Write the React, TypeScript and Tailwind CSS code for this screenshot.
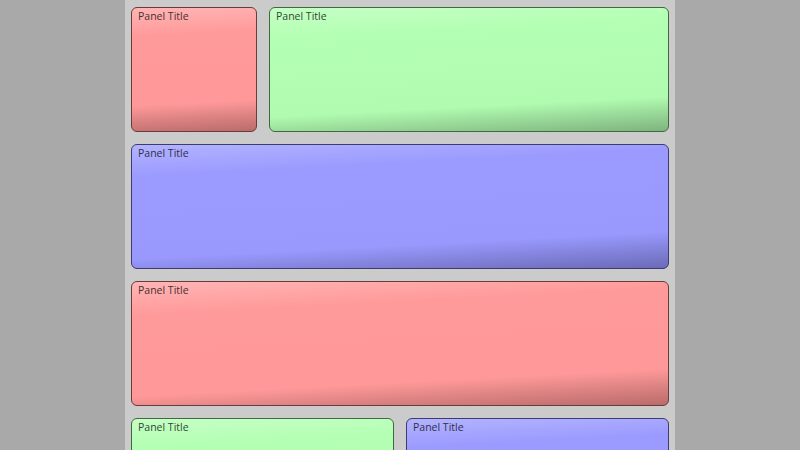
const tones = {
  red: "border-[#6b3a3a] bg-[linear-gradient(177deg,#ffb5b5_0%,#ff9a9a_22%,#ff9898_76%,#e08585_86%,#bb6b6b_100%)] text-[#4a2f2f]",
  green:
    "border-[#3f6a3f] bg-[linear-gradient(177deg,#c6ffc6_0%,#b3ffb3_22%,#b0fbb0_76%,#9bdc9b_86%,#7fb47f_100%)] text-[#2f4a2f]",
  blue: "border-[#3c3c72] bg-[linear-gradient(177deg,#b3b3ff_0%,#9a9aff_22%,#9898fd_76%,#8585df_86%,#6b6bb8_100%)] text-[#2f2f4a]",
};

type Tone = keyof typeof tones;

function Panel({ tone, className = "" }: { tone: Tone; className?: string }) {
  return (
    <div
      className={`h-[125px] shrink-0 rounded-[6px] border px-[6px] pt-[1px] ${tones[tone]} ${className}`}
    >
      <div className="text-[10.5px] leading-[14px]">Panel Title</div>
    </div>
  );
}

export default function App() {
  return (
    <div
      className="flex h-[450px] w-[800px] justify-center overflow-hidden bg-[#a9a9a9]"
      style={{ fontFamily: '"Open Sans", "Noto Sans", sans-serif' }}
    >
      <div className="flex w-[550px] flex-col gap-[12px] bg-[#cbcbcb] px-[6px] pt-[7px]">
        <div className="flex shrink-0 gap-[12px]">
          <Panel tone="red" className="w-[126px]" />
          <Panel tone="green" className="flex-1" />
        </div>
        <Panel tone="blue" />
        <Panel tone="red" />
        <div className="flex shrink-0 gap-[12px]">
          <Panel tone="green" className="flex-1" />
          <Panel tone="blue" className="flex-1" />
        </div>
      </div>
    </div>
  );
}
